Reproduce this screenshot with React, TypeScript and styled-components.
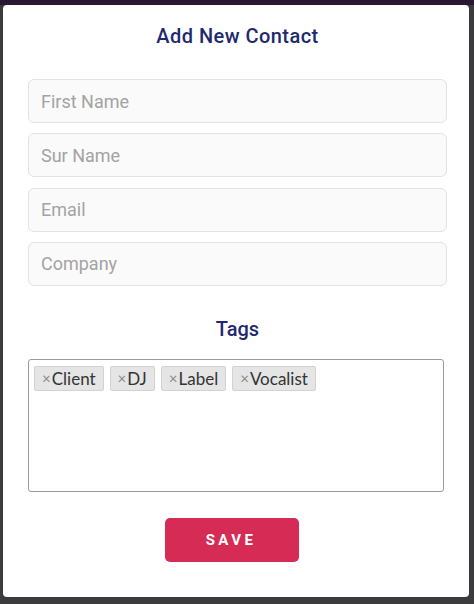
import styled, { createGlobalStyle } from "styled-components";

const GlobalStyle = createGlobalStyle`
  html, body {
    margin: 0;
    padding: 0;
    background: linear-gradient(to bottom, #2a1733 0px, #2a1733 5px, #3b3a3c 5px);
    height: 100%;
  }
  #root {
    min-height: 100%;
  }
  * { box-sizing: border-box; }
`;

const Page = styled.div`
  display: flex;
  padding: 5px 5px 7px 3px;
`;

const Card = styled.div`
  width: 466px;
  height: 592px;
  background: #fff;
  border-radius: 4px;
  padding: 18px 22px 0 25px;
  display: flex;
  flex-direction: column;
  font-family: "Roboto", "Liberation Sans", sans-serif;
`;

const Title = styled.h2`
  margin: 0 0 30px;
  text-align: center;
  font-size: 20px;
  line-height: 26px;
  font-weight: 500;
  color: #1f2a6e;
  letter-spacing: 0.45px;
`;

const Fields = styled.div`
  display: flex;
  flex-direction: column;
  gap: 10.3px;
`;

const Input = styled.input`
  width: 100%;
  height: 44px;
  padding: 0 12px;
  border: 1px solid #e3e3e3;
  border-radius: 6px;
  background: #fafafa;
  font-family: "Roboto", "Liberation Sans", sans-serif;
  font-size: 18px;
  color: #333;
  outline: none;

  &::placeholder {
    color: #a3a3a3;
  }
`;

const SectionTitle = styled.h3`
  margin: 31px 0 18px;
  text-align: center;
  font-size: 20px;
  line-height: 24px;
  font-weight: 500;
  color: #1f2a6e;
`;

const TagBox = styled.div`
  width: 416px;
  height: 133px;
  border: 1px solid #9a9a9a;
  border-radius: 3px;
  padding: 6px 5px;
  display: flex;
  flex-wrap: wrap;
  align-content: flex-start;
  gap: 6px;
`;

const Tag = styled.span`
  display: inline-flex;
  align-items: center;
  height: 25px;
  padding: 0 7px;
  background: #e5e5e5;
  border: 1px solid #d2d2d2;
  border-radius: 2px;
  font-family: "Lato", "Liberation Sans", sans-serif;
  font-size: 17px;
  color: #333;
`;

const Remove = styled.span`
  color: #8a8a8a;
  font-size: 15px;
  margin-right: 1px;
`;

const Actions = styled.div`
  display: flex;
  justify-content: center;
  margin-top: 26px;
  padding-right: 11px;
`;

const SaveButton = styled.button`
  width: 134px;
  height: 44px;
  border: none;
  border-radius: 5px;
  background: #d52b55;
  color: #fff;
  font-family: "Roboto", "Liberation Sans", sans-serif;
  font-weight: 700;
  font-size: 15px;
  letter-spacing: 3.4px;
  padding-left: 4px;
  cursor: pointer;
`;

const fields = ["First Name", "Sur Name", "Email", "Company"];
const tags = ["Client", "DJ", "Label", "Vocalist"];

export default function App() {
  return (
    <>
      <GlobalStyle />
      <Page>
        <Card>
          <Title>Add New Contact</Title>
          <Fields>
            {fields.map((f) => (
              <Input key={f} placeholder={f} />
            ))}
          </Fields>
          <SectionTitle>Tags</SectionTitle>
          <TagBox>
            {tags.map((t) => (
              <Tag key={t}>
                <Remove>×</Remove>
                {t}
              </Tag>
            ))}
          </TagBox>
          <Actions>
            <SaveButton>SAVE</SaveButton>
          </Actions>
        </Card>
      </Page>
    </>
  );
}
